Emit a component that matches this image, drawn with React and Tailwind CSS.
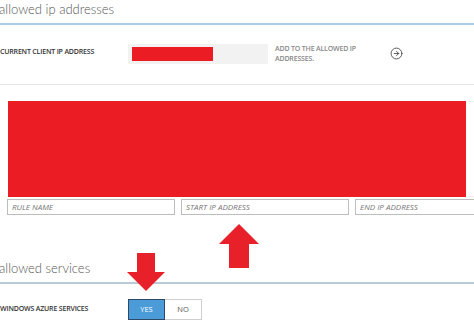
import { CircleArrowRight } from 'lucide-react';

const font = { fontFamily: '"Open Sans", "Segoe UI", sans-serif' };
const light = { fontFamily: 'Lato, "Segoe UI", sans-serif' };

function UpArrow() {
  return (
    <svg width="40" height="44" viewBox="0 0 40 44" className="absolute left-[219px] top-[224px]">
      <polygon points="20,0 40,20 30,20 30,44 10,44 10,20 0,20" fill="#e8202a" />
    </svg>
  );
}

function DownArrow() {
  return (
    <svg width="38" height="38" viewBox="0 0 38 38" className="absolute left-[127px] top-[253px]">
      <polygon points="10,0 28,0 28,19 38,19 19,38 0,19 10,19" fill="#e8202a" />
    </svg>
  );
}

export default function App() {
  return (
    <div className="relative h-[327px] w-[474px] overflow-hidden bg-white" style={font}>
      <div className="h-[25px] border-b-2 border-[#a9cbe6]">
        <h1 className="-ml-[1px] pt-[1px] text-[13px] font-light leading-[16px] text-[#555]" style={light}>
          allowed ip addresses
        </h1>
      </div>

      <div className="flex h-[60px] items-center border-b border-[#e6e6e6] pb-[2px]">
        <div className="w-[128px] self-start pt-[22px] text-[7px] font-semibold tracking-tight text-[#333]">
          CURRENT CLIENT IP ADDRESS
        </div>
        <div className="flex h-[20px] w-[140px] items-center bg-[#f2f2f2] pl-[4px]">
          <div className="h-[14px] w-[81px] bg-[#ec1c24]" />
        </div>
        <div className="ml-[7px] w-[100px] text-[7px] font-semibold leading-[10px] tracking-tight text-[#888]">
          ADD TO THE ALLOWED IP
          <br />
          ADDRESSES.
        </div>
        <CircleArrowRight className="ml-[15px] h-[13px] w-[13px] text-[#444]" strokeWidth={1.6} />
      </div>

      <div className="mt-[16px] flex">
        <div className="ml-[8px] h-[96px] w-[458px] bg-[#ec1c24]" />
        <div className="ml-[2px] flex-1 border-y border-[#eee]" />
      </div>

      <div className="mt-[2px] flex gap-[6px] pl-[7px]">
        {['RULE NAME', 'START IP ADDRESS', 'END IP ADDRESS'].map(p => (
          <div
            key={p}
            className="flex h-[16px] w-[168px] shrink-0 items-center border border-[#bdbdbd] pl-[4px] text-[8px] italic text-[#777]"
          >
            {p}
          </div>
        ))}
      </div>

      <div className="mt-[44px] h-[25px] border-b-2 border-[#b9cad9]">
        <h2 className="-ml-[1px] pt-[1px] text-[13px] font-light leading-[16px] text-[#555]" style={light}>
          allowed services
        </h2>
      </div>

      <div className="mt-[15px] flex items-center">
        <div className="w-[128px] text-[7px] font-semibold tracking-tight text-[#333]">WINDOWS AZURE SERVICES</div>
        <div className="flex h-[21px]">
          <div className="flex w-[37px] items-center justify-center border border-[#2c4a66] bg-[#4a9bd8] text-[7.5px] text-white">
            YES
          </div>
          <div className="flex w-[37px] items-center justify-center border border-l-0 border-[#cfcfcf] bg-white text-[7.5px] text-[#555]">
            NO
          </div>
        </div>
      </div>

      <UpArrow />
      <DownArrow />
    </div>
  );
}
